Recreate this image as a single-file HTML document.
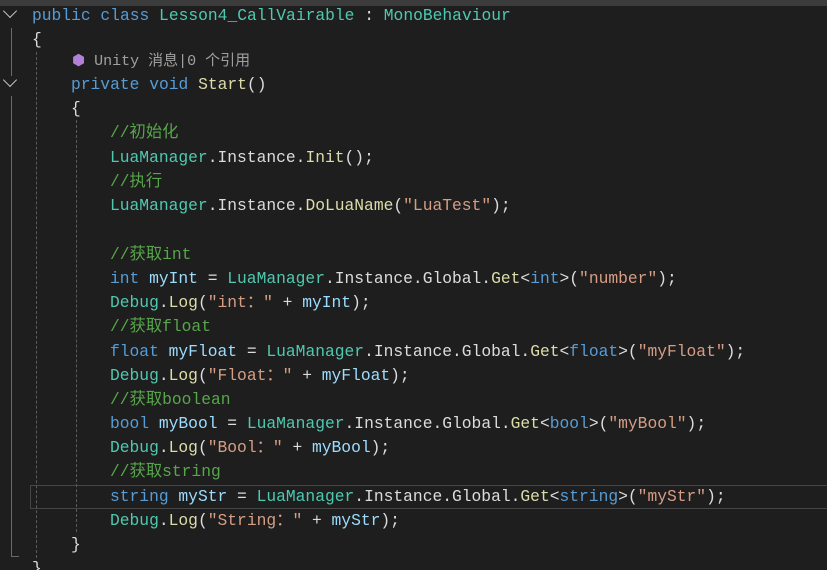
<!DOCTYPE html>
<html><head><meta charset="utf-8"><style>
html,body{margin:0;padding:0;background:#1e1e1e;width:827px;height:570px;overflow:hidden;position:relative}
.top{position:absolute;left:0;top:0;width:827px;height:6px;background:#3c3c3c}
.l{position:absolute;white-space:pre;font-family:"Liberation Mono","Noto Sans CJK SC",monospace;font-size:16.3px;line-height:24px;height:24px;color:#dcdcdc}
.k{color:#569cd6}.t{color:#4ec9b0}.m{color:#dcdcaa}.s{color:#d69d85}.c{color:#57a64a}.v{color:#9cdcfe}
.cj{font-family:"Noto Sans CJK SC",sans-serif;line-height:1px}
.hint{font-size:15px;color:#a0a0a0}
.g{position:absolute;width:0;border-left:1px dashed #5a5a5a}
.sol{position:absolute;left:11px;width:1px;background:#6a6a6a}
.chev{position:absolute;left:5px;width:9px;height:9px;border-right:1.5px solid #c0c0c0;border-bottom:1.5px solid #c0c0c0;transform:rotate(45deg)}
.cur{position:absolute;left:30px;top:485px;width:800px;height:22px;border:1px solid #464646}
</style></head><body>
<div class="top"></div>
<div class="cur"></div>
<div class="chev" style="top:6px"></div>
<div class="chev" style="top:75px"></div>
<div class="sol" style="top:28px;height:48px"></div>
<div class="sol" style="top:96px;height:460px"></div>
<div style="position:absolute;left:11px;top:556px;width:8px;height:1px;background:#6a6a6a"></div>
<div class="g" style="left:36px;top:52px;height:506px"></div>
<div class="g" style="left:76px;top:120px;height:412px"></div>
<div class="l" style="left:32px;top:4px"><span class="k">public</span> <span class="k">class</span> <span class="t">Lesson4_CallVairable</span> : <span class="t">MonoBehaviour</span></div>
<div class="l" style="left:32px;top:28px">{</div>
<div class="l hint" style="left:72px;top:50px"><span style="color:#b180d7">⬢</span> Unity <span class="cj">消息</span>|0 <span class="cj">个引用</span></div>
<div class="l" style="left:71px;top:73px"><span class="k">private</span> <span class="k">void</span> <span class="m">Start</span>()</div>
<div class="l" style="left:71px;top:97px">{</div>
<div class="l c" style="left:110px;top:121px">//<span class="cj">初始化</span></div>
<div class="l" style="left:110px;top:146px"><span class="t">LuaManager</span>.Instance.<span class="m">Init</span>();</div>
<div class="l c" style="left:110px;top:170px">//<span class="cj">执行</span></div>
<div class="l" style="left:110px;top:194px"><span class="t">LuaManager</span>.Instance.<span class="m">DoLuaName</span>(<span class="s">"LuaTest"</span>);</div>
<div class="l c" style="left:110px;top:243px">//<span class="cj">获取</span>int</div>
<div class="l" style="left:110px;top:267px"><span class="k">int</span> <span class="v">myInt</span> = <span class="t">LuaManager</span>.Instance.Global.<span class="m">Get</span>&lt;<span class="k">int</span>&gt;(<span class="s">"number"</span>);</div>
<div class="l" style="left:110px;top:291px"><span class="t">Debug</span>.<span class="m">Log</span>(<span class="s">"int<span class="cj">：</span>"</span> + <span class="v">myInt</span>);</div>
<div class="l c" style="left:110px;top:315px">//<span class="cj">获取</span>float</div>
<div class="l" style="left:110px;top:340px"><span class="k">float</span> <span class="v">myFloat</span> = <span class="t">LuaManager</span>.Instance.Global.<span class="m">Get</span>&lt;<span class="k">float</span>&gt;(<span class="s">"myFloat"</span>);</div>
<div class="l" style="left:110px;top:364px"><span class="t">Debug</span>.<span class="m">Log</span>(<span class="s">"Float<span class="cj">：</span>"</span> + <span class="v">myFloat</span>);</div>
<div class="l c" style="left:110px;top:388px">//<span class="cj">获取</span>boolean</div>
<div class="l" style="left:110px;top:412px"><span class="k">bool</span> <span class="v">myBool</span> = <span class="t">LuaManager</span>.Instance.Global.<span class="m">Get</span>&lt;<span class="k">bool</span>&gt;(<span class="s">"myBool"</span>);</div>
<div class="l" style="left:110px;top:436px"><span class="t">Debug</span>.<span class="m">Log</span>(<span class="s">"Bool<span class="cj">：</span>"</span> + <span class="v">myBool</span>);</div>
<div class="l c" style="left:110px;top:460px">//<span class="cj">获取</span>string</div>
<div class="l" style="left:110px;top:485px"><span class="k">string</span> <span class="v">myStr</span> = <span class="t">LuaManager</span>.Instance.Global.<span class="m">Get</span>&lt;<span class="k">string</span>&gt;(<span class="s">"myStr"</span>);</div>
<div class="l" style="left:110px;top:509px"><span class="t">Debug</span>.<span class="m">Log</span>(<span class="s">"String<span class="cj">：</span>"</span> + <span class="v">myStr</span>);</div>
<div class="l" style="left:71px;top:533px">}</div>
<div class="l" style="left:32px;top:557px">}</div>
</body></html>
